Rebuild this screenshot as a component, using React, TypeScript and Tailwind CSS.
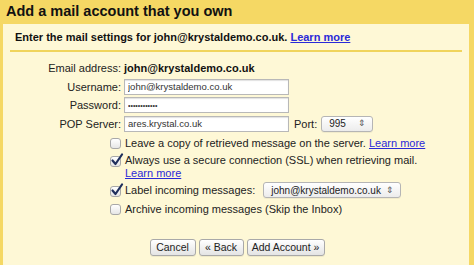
import { useState } from "react";

function Field({ label, children }: { label: string; children: React.ReactNode }) {
    return (
        <div className="flex items-center h-[18.5px]">
            <span className="w-[121px] text-right pr-[3px] text-[#222]">{label}</span>
            {children}
        </div>
    )
}

function Select({ value, width }: { value: string; width: string }) {
    return (
        <div className={`flex items-center justify-between h-[16px] ${width} rounded-[3px] border border-[#b5b5b5] bg-gradient-to-b from-white to-[#ececec] pl-[7px] pr-[6px] text-[10px] text-[#222] shadow-[0_1px_0_rgba(0,0,0,0.05)]`}>
            <span>{value}</span>
            <span className="text-[9px] leading-none text-[#555]">⇕</span>
        </div>
    )
}

function Check({ checked }: { checked: boolean }) {
    return (
        <span className="relative mt-[2px] flex h-[11px] w-[11px] shrink-0 items-center justify-center rounded-[3px] border border-[#a8a8a8] bg-gradient-to-b from-white to-[#e6e6e6]">
            {checked && (
                <svg viewBox="0 0 14 14" className="absolute left-[-1px] top-[-4px] h-[14px] w-[14px]">
                    <path d="M2.5 7.5 L5.5 11 L12 1.5" fill="none" stroke="#1f2f5c" strokeWidth="2.2" strokeLinecap="round" strokeLinejoin="round" />
                </svg>
            )}
        </span>
    )
}

export default function App() {
    const [username, setUsername] = useState("john@krystaldemo.co.uk")
    const [server, setServer] = useState("ares.krystal.co.uk")
    const input = "h-[16px] w-[165px] border border-[#b8b8b8] bg-white px-[3px] text-[9.5px] text-[#333] shadow-[inset_0_1px_1px_rgba(0,0,0,0.12)] outline-none"
    const btn = "h-[17px] rounded-[3px] border border-[#a9a9a9] bg-gradient-to-b from-white to-[#e4e4e4] text-center text-[10.5px] leading-none text-[#222] shadow-[0_1px_0_rgba(0,0,0,0.06)]"
    return (
        <div className="flex h-[265px] w-[474px] flex-col bg-[#f5d864] font-['Liberation_Sans',Arial,sans-serif] text-[11px] text-[#111]">
            <div className="flex h-[24px] items-center px-[6px] text-[14.5px] font-bold text-[#111]">Add a mail account that you own</div>
            <div className="ml-[3px] mr-[5px] flex flex-1 flex-col bg-[#fef8d6]">
                <div className="mx-[7px] flex h-[28px] items-center border-b-2 border-[#f0d45c] pl-[5px] pt-[1px] font-bold">
                    Enter the mail settings for john@krystaldemo.co.uk.&nbsp;<a className="text-[#2a2ad8] underline">Learn more</a>
                </div>
                <div className="flex flex-col pt-[7px]">
                    <Field label="Email address:">
                        <span className="font-bold">john@krystaldemo.co.uk</span>
                    </Field>
                    <Field label="Username:">
                        <input value={username} onChange={e => setUsername(e.target.value)} className={input} />
                    </Field>
                    <Field label="Password:">
                        <input readOnly value="••••••••••••" className={`${input} !text-[7px]`} />
                    </Field>
                    <Field label="POP Server:">
                        <input value={server} onChange={e => setServer(e.target.value)} className={input} />
                        <span className="ml-[5px] mr-[4px] text-[#222]">Port:</span>
                        <Select value="995" width="w-[52px]" />
                    </Field>
                </div>
                <div className="ml-[107px] mt-[3px] flex flex-col text-[#222]">
                    <div className="flex items-start gap-[4px]">
                        <Check checked={false} />
                        <p className="leading-[14px]">Leave a copy of retrieved message on the server. <a className="text-[#2a2ad8] underline">Learn more</a></p>
                    </div>
                    <div className="mt-[4px] flex items-start gap-[4px]">
                        <Check checked={true} />
                        <p className="leading-[13px]">Always use a secure connection (SSL) when retrieving mail.<br /><a className="text-[#2a2ad8] underline">Learn more</a></p>
                    </div>
                    <div className="mt-[2px] flex items-center gap-[4px]">
                        <Check checked={true} />
                        <span className="mr-[4px]">Label incoming messages:</span>
                        <Select value="john@krystaldemo.co.uk" width="w-[138px]" />
                    </div>
                    <div className="mt-[3px] flex items-start gap-[4px]">
                        <Check checked={false} />
                        <p className="leading-[14px]">Archive incoming messages (Skip the Inbox)</p>
                    </div>
                </div>
                <div className="mt-[23px] flex justify-center gap-[3px] pl-[2px]">
                    <button className={`${btn} w-[46px]`}>Cancel</button>
                    <button className={`${btn} w-[45px]`}>« Back</button>
                    <button className={`${btn} w-[78px]`}>Add Account »</button>
                </div>
            </div>
        </div>
    )
}
